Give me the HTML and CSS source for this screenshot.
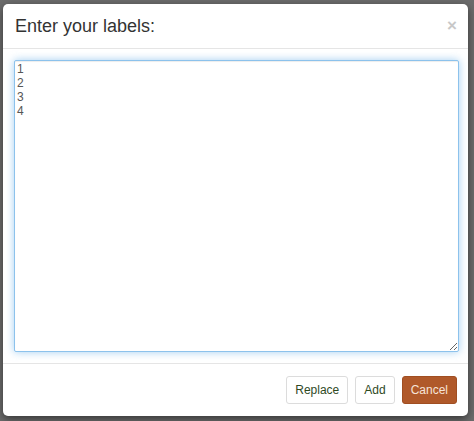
FILE: index.html
```html
<!DOCTYPE html>
<html>
<head>
<meta charset="utf-8">
<link rel="stylesheet" href="styles.css">
</head>
<body>
<div class="backdrop">
  <div class="modal">
    <div class="modal-header">
      <h4 class="modal-title">Enter your labels:</h4>
      <span class="close">×</span>
    </div>
    <div class="modal-body">
      <textarea class="labels">1
2
3
4</textarea>
    </div>
    <div class="modal-footer">
      <button class="btn">Replace</button>
      <button class="btn">Add</button>
      <button class="btn btn-cancel">Cancel</button>
    </div>
  </div>
</div>
</body>
</html>
```
FILE: styles.css
```css
html, body {
  margin: 0;
  padding: 0;
  width: 474px;
  height: 421px;
  overflow: hidden;
  background: #6c6c6c;
  font-family: "Liberation Sans", Arial, sans-serif;
}
.backdrop {
  width: 474px;
  height: 421px;
  padding: 4px 6px 5px 3px;
  box-sizing: border-box;
}
.modal {
  height: 412px;
  background: #fff;
  border-radius: 5px;
  box-shadow: 0 3px 9px rgba(0,0,0,.5);
  display: flex;
  flex-direction: column;
}
.modal-header {
  display: flex;
  align-items: center;
  justify-content: space-between;
  padding: 9px 11px 9px 12px;
  border-bottom: 1px solid #e5e5e5;
}
.modal-title {
  margin: 0;
  font-size: 18px;
  font-weight: normal;
  line-height: 26px;
  color: #333;
}
.close {
  font-size: 17px;
  font-weight: bold;
  color: #c8c8c8;
  line-height: 20px;
}
.modal-body {
  flex: 1;
  display: flex;
  padding: 11px 9px 11px 11px;
  border-bottom: 1px solid #e5e5e5;
}
.labels {
  flex: 1;
  margin: 0;
  resize: both;
  border: 1px solid #8cc2ec;
  border-radius: 2px;
  box-shadow: inset 0 1px 1px rgba(0,0,0,.075), 0 0 8px rgba(102,175,233,.6);
  outline: none;
  padding: 1px 2px;
  font-family: "Liberation Sans", Arial, sans-serif;
  font-size: 12px;
  line-height: 14px;
  color: #555;
}
.modal-footer {
  display: flex;
  justify-content: flex-end;
  gap: 7px;
  padding: 12px 11px 12px 12px;
}
.btn {
  height: 28px;
  padding: 0 8px;
  font-family: "Liberation Sans", Arial, sans-serif;
  font-size: 12px;
  color: #2f4a1f;
  background: #fff;
  border: 1px solid #dcdcdc;
  border-radius: 3px;
}
.btn-cancel {
  background: #b0592a;
  border-color: #a04e22;
  color: #f6e4d8;
}
```
